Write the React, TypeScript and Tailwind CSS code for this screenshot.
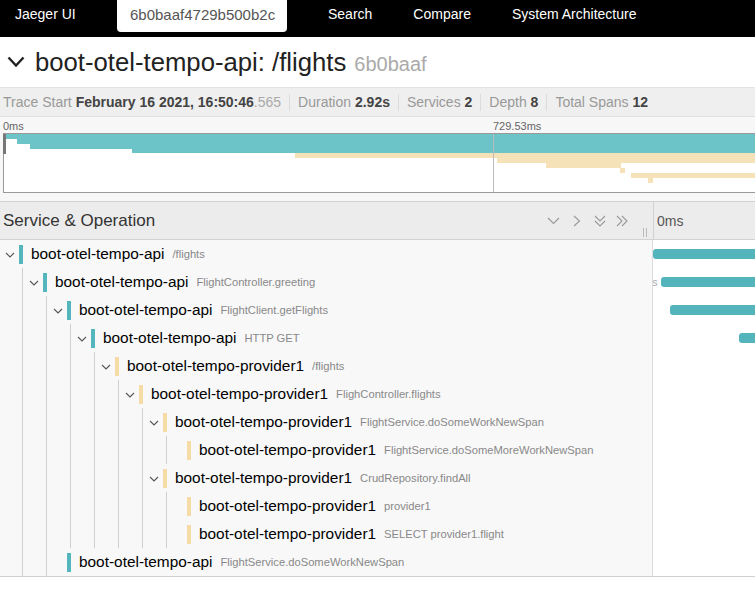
import React from "react"

const API = "boot-otel-tempo-api"
const PROV = "boot-otel-tempo-provider1"

type Span = {
  depth: number
  service: string
  op: string
  kids: boolean
  bar?: string
  label?: boolean
}

const spans: Span[] = [
  { depth: 0, service: API, op: "/flights", kids: true, bar: "ml-0" },
  { depth: 1, service: API, op: "FlightController.greeting", kids: true, bar: "ml-[8px]", label: true },
  { depth: 2, service: API, op: "FlightClient.getFlights", kids: true, bar: "ml-[17px]" },
  { depth: 3, service: API, op: "HTTP GET", kids: true, bar: "ml-[86px]" },
  { depth: 4, service: PROV, op: "/flights", kids: true },
  { depth: 5, service: PROV, op: "FlighController.flights", kids: true },
  { depth: 6, service: PROV, op: "FlightService.doSomeWorkNewSpan", kids: true },
  { depth: 7, service: PROV, op: "FlightService.doSomeMoreWorkNewSpan", kids: false },
  { depth: 6, service: PROV, op: "CrudRepository.findAll", kids: true },
  { depth: 7, service: PROV, op: "provider1", kids: false },
  { depth: 7, service: PROV, op: "SELECT provider1.flight", kids: false },
  { depth: 2, service: API, op: "FlightService.doSomeWorkNewSpan", kids: false },
]

// minimap rows: [x, width, color]
const TEAL = "#6cc4c9"
const SAND = "#f6e2b9"
const mini: [number, number, string][] = [
  [0, 900, TEAL],
  [13, 900, TEAL],
  [26, 900, TEAL],
  [128, 900, TEAL],
  [291, 900, SAND],
  [493, 900, SAND],
  [542, 75, SAND],
  [616, 5, SAND],
  [627, 900, SAND],
  [644, 5, SAND],
  [900, 10, SAND],
  [900, 10, TEAL],
]

function Chevron({ className }: { className?: string }) {
  return (
    <svg width="10" height="6" viewBox="0 0 10 6" className={className}>
      <polyline points="1,1 5,5 9,1" fill="none" stroke="#555" strokeWidth="1.1" />
    </svg>
  )
}

function Sep() {
  return <span className="w-px h-[17px] bg-[#dcdcdc] mx-[8px]" />
}

export default function App() {
  return (
    <div className="w-[755px] h-[611px] overflow-hidden bg-white font-['Liberation_Sans',Arial,sans-serif]">
      {/* top nav */}
      <nav className="h-[37px] bg-black flex items-start text-white text-[14px]">
        <span className="w-[117px] pl-[15px] leading-[29px]">Jaeger UI</span>
        <div className="w-[170px] h-[32px] bg-white rounded-b-[4px] pl-[13px] text-[15px] text-[#555] leading-[29px]">
          6b0baaf4729b500b2c
        </div>
        <div className="flex gap-[41px] ml-[41px] leading-[29px]">
          <span>Search</span>
          <span>Compare</span>
          <span>System Architecture</span>
        </div>
      </nav>

      {/* title */}
      <div className="h-[38px] flex items-center mt-[6px] mb-[6px]">
        <svg width="18" height="12" viewBox="0 0 18 12" className="ml-[7px] mr-[10px]">
          <polyline points="1.5,1.5 9,9.5 16.5,1.5" fill="none" stroke="#222" strokeWidth="2.4" />
        </svg>
        <h1 className="text-[25.7px] text-[#222] font-medium">boot-otel-tempo-api: /flights</h1>
        <span className="text-[20px] text-[#aaa] ml-[8px] mt-[4px]">6b0baaf</span>
      </div>

      {/* trace info */}
      <div className="h-[29px] bg-[#efefef] border-t border-[#e2e2e2] flex items-center pl-[3px] text-[14px] text-[#999]">
        <span>
          Trace Start <b className="text-[#444]">February 16 2021, 16:50:46</b>
          <span className="text-[#aaa]">.565</span>
        </span>
        <Sep />
        <span>
          Duration <b className="text-[#444]">2.92s</b>
        </span>
        <Sep />
        <span>
          Services <b className="text-[#444]">2</b>
        </span>
        <Sep />
        <span>
          Depth <b className="text-[#444]">8</b>
        </span>
        <Sep />
        <span>
          Total Spans <b className="text-[#444]">12</b>
        </span>
      </div>

      {/* minimap */}
      <div className="h-[85px] bg-[#f7f7f7] border-t border-[#e0e0e0] pl-[3px] pb-[8px]">
        <div className="h-[16px] relative text-[11px] text-[#666]">
          <span className="absolute left-0 top-[1px]">0ms</span>
          <span className="absolute left-[490px] top-[1px]">729.53ms</span>
        </div>
        <div className="relative h-[60px] bg-white border border-r-0 border-[#999]">
          <svg width="800" height="58" className="block">
            {mini.map(([x, w, c], i) => {
              const y = Math.round(i * 4.85)
              const h = Math.round((i + 1) * 4.85) - y
              return <rect key={i} x={x} y={y} width={w} height={h} fill={c} />
            })}
            <rect x="489" y="0" width="1" height="58" fill="#bbb" />
          </svg>
          <div className="absolute left-[-1px] top-0 w-[3px] h-[20px] bg-[#777]" />
        </div>
      </div>

      {/* header */}
      <div className="h-[39px] bg-[#ececec] border-y border-[#d2d2d2] flex">
        <div className="w-[653px] flex items-center pl-[3px] pt-[1px] relative">
          <span className="text-[17px] text-[#333]">Service &amp; Operation</span>
          <div className="ml-auto mr-[24px] flex items-center gap-[10px] text-[#999]">
            <svg width="13" height="8" viewBox="0 0 13 8">
              <polyline points="1,1 6.5,6.5 12,1" fill="none" stroke="#999" strokeWidth="1.1" />
            </svg>
            <svg width="10" height="12" viewBox="0 0 10 12" className="ml-[2px]">
              <polyline points="2,1 7.5,6 2,11" fill="none" stroke="#999" strokeWidth="1.1" />
            </svg>
            <svg width="12" height="13" viewBox="0 0 12 13" className="ml-[2px]">
              <polyline points="1,1 6,6 11,1" fill="none" stroke="#999" strokeWidth="1.1" />
              <polyline points="1,6 6,11 11,6" fill="none" stroke="#999" strokeWidth="1.1" />
            </svg>
            <svg width="13" height="12" viewBox="0 0 13 12">
              <polyline points="1,1 6,6 1,11" fill="none" stroke="#999" strokeWidth="1.1" />
              <polyline points="6,1 11,6 6,11" fill="none" stroke="#999" strokeWidth="1.1" />
            </svg>
          </div>
          <div className="absolute right-[6px] bottom-[2px] flex gap-[2px]">
            <span className="w-px h-[9px] bg-[#bbb]" />
            <span className="w-px h-[9px] bg-[#bbb]" />
          </div>
        </div>
        <div className="flex-1 border-l border-[#d2d2d2] flex items-center pl-[3px] pt-[1px] text-[14px] text-[#555]">
          0ms
        </div>
      </div>

      {/* rows */}
      <div className="border-b border-[#cfcfcf]">
        {spans.map((s, i) => (
          <div key={i} className="h-[28px] flex">
            <div className="w-[653px] shrink-0 bg-[#f8f8f8] border-r border-[#dcdcdc] flex items-center">
              {Array.from({ length: s.depth }).map((_, k) => (
                <div key={k} className="w-[23px] mr-px h-full shrink-0 border-r border-[#d0d0d0]" />
              ))}
              <div className="w-[19px] shrink-0 flex justify-center">
                {s.kids && <Chevron className="mt-[1px]" />}
              </div>
              <span
                className={`w-[4px] h-[19px] shrink-0 ${s.service === API ? "bg-[#55b5bc]" : "bg-[#f5dca6]"}`}
              />
              <span className="ml-[8px] text-[15.4px] text-black whitespace-nowrap">{s.service}</span>
              <span className="ml-[8px] text-[11.2px] text-[#888] whitespace-nowrap">{s.op}</span>
            </div>
            <div className="flex-1 bg-white relative overflow-hidden flex items-center">
              {s.label && <span className="absolute left-[-1px] text-[11px] text-[#aaa]">s</span>}
              {s.bar && <div className={`${s.bar} w-[200px] h-[10px] shrink-0 bg-[#54b4bc] rounded-l-[3px]`} />}
            </div>
          </div>
        ))}
      </div>
    </div>
  )
}
